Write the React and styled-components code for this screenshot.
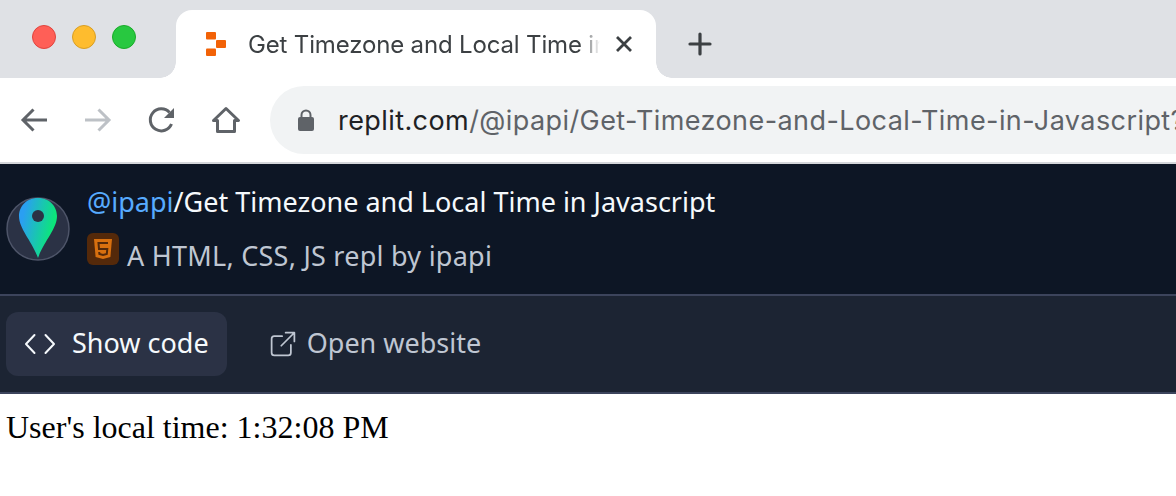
import React from "react"
import styled, { createGlobalStyle } from "styled-components"

const GlobalStyle = createGlobalStyle`
  html, body {
    margin: 0;
    padding: 0;
    background: #ffffff;
  }
  body {
    width: 1176px;
    height: 496px;
    overflow: hidden;
  }
`

const Page = styled.div`
  width: 1176px;
  height: 496px;
  overflow: hidden;
  background: #ffffff;
`

const TabStrip = styled.div`
  height: 78px;
  box-sizing: border-box;
  padding: 10px 0 0 32px;
  display: flex;
  background: #dfe1e5;
`

const TrafficLights = styled.div`
  display: flex;
  gap: 16px;
  height: 24px;
  margin-top: 15px;
  width: 144px;
`

const Light = styled.span`
  width: 24px;
  height: 24px;
  box-sizing: border-box;
  border-radius: 50%;
  background: ${(p) => p.$color};
  border: 1px solid ${(p) => p.$edge};
`

const Tab = styled.div`
  position: relative;
  width: 480px;
  height: 68px;
  box-sizing: border-box;
  padding: 0 20px 0 30px;
  display: flex;
  align-items: center;
  background: #ffffff;
  border-radius: 16px 16px 0 0;

  &::before,
  &::after {
    content: "";
    position: absolute;
    bottom: 0;
    width: 16px;
    height: 16px;
  }
  &::before {
    left: -16px;
    background: radial-gradient(circle at 0 0, transparent 15.5px, #ffffff 16px);
  }
  &::after {
    right: -16px;
    background: radial-gradient(circle at 100% 0, transparent 15.5px, #ffffff 16px);
  }
`

const Favicon = styled.svg`
  width: 20px;
  height: 24px;
  flex: none;
`

const TabTitle = styled.span`
  margin-left: 22px;
  width: 352px;
  flex: none;
  overflow: hidden;
  white-space: nowrap;
  font-family: Inter, "Liberation Sans", sans-serif;
  font-size: 24px;
  letter-spacing: -0.16px;
  color: #3c4043;
  -webkit-mask-image: linear-gradient(to right, #000 332px, transparent 352px);
  mask-image: linear-gradient(to right, #000 332px, transparent 352px);
`

const CloseIcon = styled.svg`
  width: 20px;
  height: 20px;
  flex: none;
  margin-left: 14px;
`

const NewTab = styled.div`
  margin-left: 32px;
  height: 68px;
  display: flex;
  align-items: center;
`

const Toolbar = styled.div`
  height: 84px;
  box-sizing: border-box;
  display: flex;
  align-items: center;
  padding-left: 18px;
  background: #ffffff;
`

const NavIcon = styled.svg`
  width: 32px;
  height: 32px;
  flex: none;
  margin-right: ${(p) => p.$gap}px;
  fill: none;
  stroke: ${(p) => p.$color || "#5f6368"};
  stroke-width: 3;
`

const Omnibox = styled.div`
  flex: 1;
  min-width: 0;
  height: 68px;
  margin-left: 28px;
  padding-left: 28px;
  display: flex;
  align-items: center;
  background: #f1f3f4;
  border-radius: 34px 0 0 34px;
  overflow: hidden;
`

const LockIcon = styled.svg`
  width: 16px;
  height: 22px;
  flex: none;
`

const Url = styled.span`
  margin-left: 24px;
  white-space: nowrap;
  font-family: Inter, "Liberation Sans", sans-serif;
  font-size: 27px;
  letter-spacing: 0.42px;
  color: #5f6368;
`

const Host = styled.span`
  color: #202124;
`

const ToolbarRule = styled.div`
  height: 2px;
  background: #d4d6da;
`

const RepoHeader = styled.header`
  height: 130px;
  box-sizing: border-box;
  display: flex;
  padding: 0 6px;
  background: #0d1625;
`

const Avatar = styled.svg`
  width: 64px;
  height: 64px;
  flex: none;
  margin-top: 33px;
`

const RepoInfo = styled.div`
  margin-left: 17px;
  display: flex;
  flex-direction: column;
  font-family: "Noto Sans", "Open Sans", sans-serif;
`

const RepoTitle = styled.div`
  margin-top: 20px;
  height: 36px;
  line-height: 36px;
  font-size: 27px;
  color: #f5f9fc;
`

const Owner = styled.span`
  color: #57abff;
`

const RepoMeta = styled.div`
  margin-top: 13px;
  display: flex;
  align-items: flex-start;
  font-size: 27px;
  letter-spacing: 0.25px;
  line-height: 36px;
  color: #bfc6d2;
`

const MetaText = styled.span`
  margin-top: 5px;
`

const LangBadge = styled.svg`
  width: 32px;
  height: 32px;
  flex: none;
  margin-right: 8px;
`

const Divider = styled.div`
  height: 2px;
  background: #3c445c;
`

const ActionBar = styled.nav`
  height: 96px;
  box-sizing: border-box;
  display: flex;
  align-items: center;
  padding: 0 6px;
  gap: 16px;
  background: #1c2433;
`

const ActionButton = styled.div`
  height: 64px;
  box-sizing: border-box;
  display: flex;
  align-items: center;
  border-radius: 12px;
  padding: ${(p) => (p.$active ? "0 18px" : "0 27px 0 26px")};
  gap: ${(p) => (p.$active ? "16px" : "10px")};
  background: ${(p) => (p.$active ? "#2b3245" : "transparent")};
  color: ${(p) => (p.$active ? "#f5f9fc" : "#bfc6d2")};
  font-family: "Noto Sans", "Open Sans", sans-serif;
  font-size: 27px;
`

const ActionLabel = styled.span`
  margin-top: -3px;
`

const ActionIcon = styled.svg`
  width: ${(p) => p.$size}px;
  height: ${(p) => p.$size}px;
  flex: none;
  fill: none;
  stroke: currentColor;
  stroke-width: 2;
  stroke-linecap: round;
  stroke-linejoin: round;
`

const Preview = styled.main`
  padding: 15px 6px 0;
  font-family: "Liberation Serif", "Times New Roman", serif;
  font-size: 32px;
  line-height: 36px;
  color: #000000;
`

const App = () => {
  return (
    <Page>
      <GlobalStyle />
      <TabStrip>
        <TrafficLights>
          <Light $color="#ff5f57" $edge="#e0443e" />
          <Light $color="#febc2e" $edge="#d89e24" />
          <Light $color="#28c840" $edge="#1aab29" />
        </TrafficLights>
        <Tab>
          <Favicon viewBox="0 0 20 24">
            <rect x="0" y="0" width="10" height="7.5" rx="1" fill="#f26207" />
            <rect x="10" y="8" width="10" height="8" rx="1" fill="#f26207" />
            <rect x="0" y="16.5" width="10" height="7.5" rx="1" fill="#f26207" />
          </Favicon>
          <TabTitle>Get Timezone and Local Time in Javascript</TabTitle>
          <CloseIcon viewBox="0 0 20 20">
            <path d="M3 3 L17 17 M17 3 L3 17" stroke="#3c4043" strokeWidth="2.8" />
          </CloseIcon>
        </Tab>
        <NewTab>
          <svg width="24" height="24" viewBox="0 0 24 24">
            <path d="M12 2 V22 M2 12 H22" stroke="#3c4043" strokeWidth="3.2" strokeLinecap="round" />
          </svg>
        </NewTab>
      </TabStrip>

      <Toolbar>
        <NavIcon viewBox="0 0 32 32" $gap={32}>
          <path d="M29 16 H5 M15.5 5.5 L5 16 L15.5 26.5" />
        </NavIcon>
        <NavIcon viewBox="0 0 32 32" $gap={32} $color="#bdc1c6">
          <path d="M3 16 H27 M16.5 5.5 L27 16 L16.5 26.5" />
        </NavIcon>
        <NavIcon viewBox="0 0 32 32" $gap={32}>
          <path d="M25.5 20 A11 11 0 1 1 23.5 8.5" />
          <path d="M28 4 V14 H18 Z" fill="#5f6368" stroke="none" />
        </NavIcon>
        <NavIcon viewBox="0 0 32 32" $gap={0}>
          <path d="M3.5 16.5 L16 4.5 L28.5 16.5 H24.5 V27.5 H7.5 V16.5 Z" strokeLinejoin="round" />
        </NavIcon>
        <Omnibox>
          <LockIcon viewBox="0 0 16 22">
            <path d="M3.5 9 V6 A4.5 4.5 0 0 1 12.5 6 V9" fill="none" stroke="#5f6368" strokeWidth="2" />
            <rect x="0" y="8" width="16" height="14" rx="2" fill="#5f6368" />
          </LockIcon>
          <Url>
            <Host>replit.com</Host>/@ipapi/Get-Timezone-and-Local-Time-in-Javascript?v=1
          </Url>
        </Omnibox>
      </Toolbar>
      <ToolbarRule />

      <RepoHeader>
        <Avatar viewBox="0 0 64 64">
          <defs>
            <linearGradient id="pin" x1="0.1" y1="0" x2="1" y2="0.3">
              <stop offset="0.1" stopColor="#2a9ff2" />
              <stop offset="0.95" stopColor="#0ce67a" />
            </linearGradient>
          </defs>
          <circle cx="32" cy="32" r="31" fill="#2b3245" stroke="#4e5569" strokeWidth="1.5" />
          <path d="M32 1 C19 1 13 11 13 19 C13 32 26 44 32 61 C38 44 51 32 51 19 C51 11 45 1 32 1 Z" fill="url(#pin)" />
          <circle cx="32" cy="19" r="6" fill="#2b3245" />
        </Avatar>
        <RepoInfo>
          <RepoTitle>
            <Owner>@ipapi</Owner>/Get Timezone and Local Time in Javascript
          </RepoTitle>
          <RepoMeta>
            <LangBadge viewBox="0 0 32 32">
              <rect width="32" height="32" rx="6" fill="#54290a" />
              <path d="M7 6 H25 L23.4 24 L16 26 L8.6 24 Z" fill="#d8700f" />
              <path d="M21 10 H11.5 L12 16 H20.3 L19.8 21 L16 22 L12.4 21 L12.2 19" fill="none" stroke="#54290a" strokeWidth="2" />
            </LangBadge>
            <MetaText>A HTML, CSS, JS repl by ipapi</MetaText>
          </RepoMeta>
        </RepoInfo>
      </RepoHeader>
      <Divider />

      <ActionBar>
        <ActionButton $active>
          <ActionIcon viewBox="0 0 32 32" $size={32}>
            <path d="M10.5 7 L2 16 L10.5 25 M21.5 7 L30 16 L21.5 25" />
          </ActionIcon>
          <ActionLabel>Show code</ActionLabel>
        </ActionButton>
        <ActionButton>
          <ActionIcon viewBox="0 0 32 32" $size={28}>
            <path d="M15 7 H6 A3 3 0 0 0 3 10 V26 A3 3 0 0 0 6 29 H22 A3 3 0 0 0 25 26 V17" />
            <path d="M14 18 L28 4 M19 3 H29 V13" />
          </ActionIcon>
          <ActionLabel>Open website</ActionLabel>
        </ActionButton>
      </ActionBar>
      <Divider />

      <Preview>User's local time: 1:32:08 PM</Preview>
    </Page>
  )
}

export default App
